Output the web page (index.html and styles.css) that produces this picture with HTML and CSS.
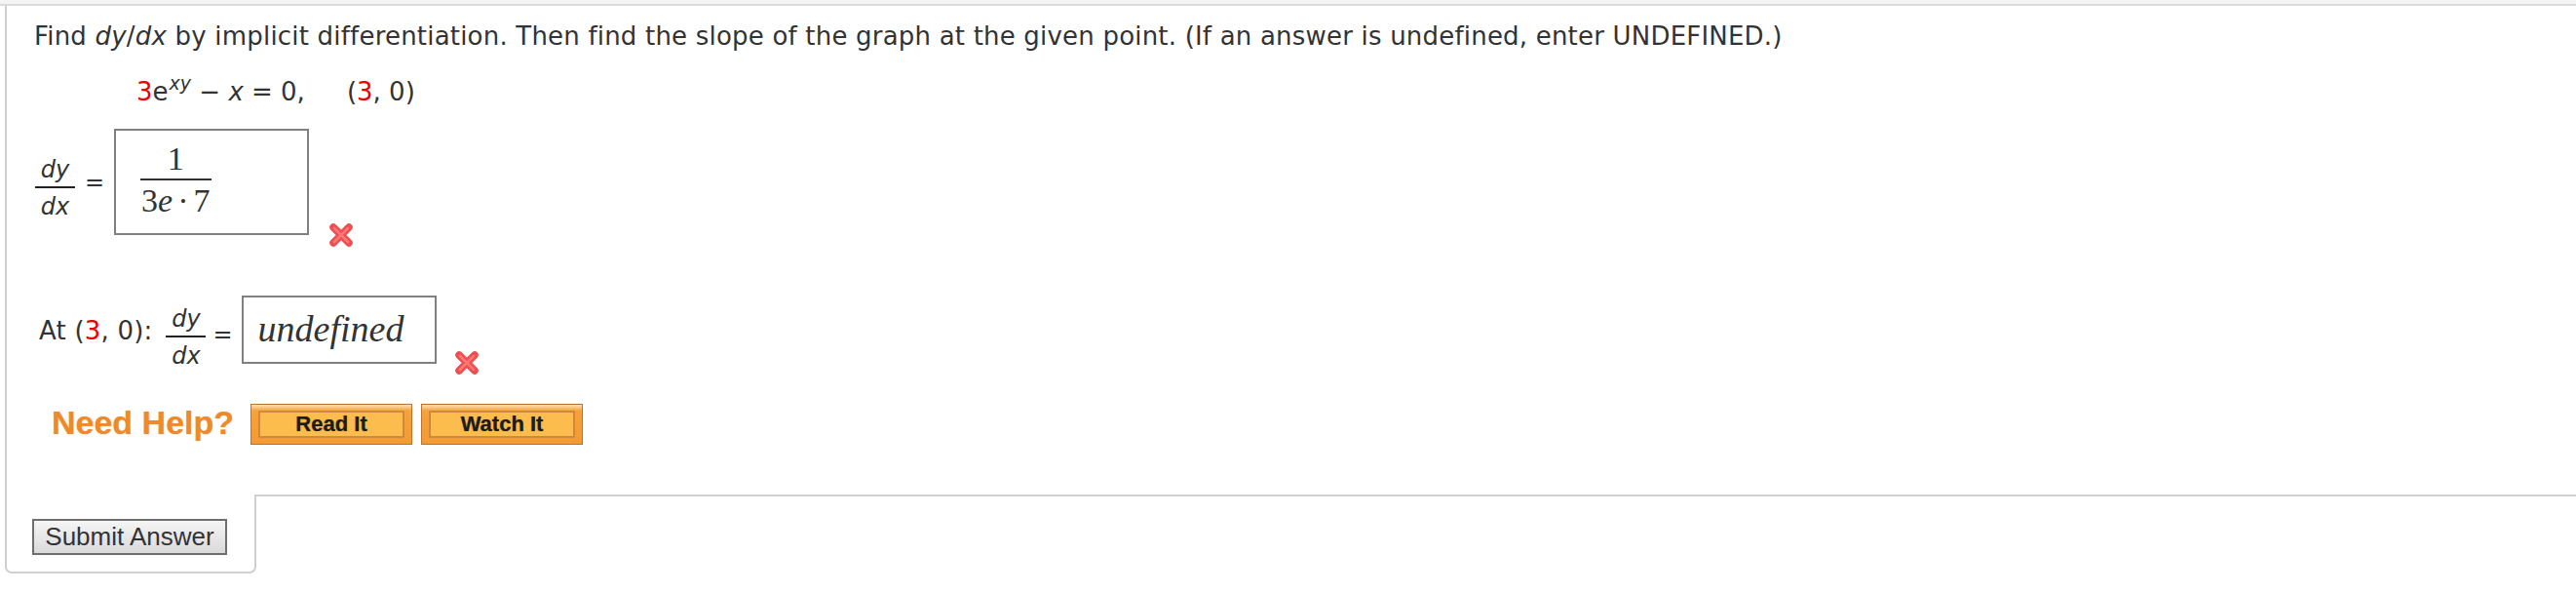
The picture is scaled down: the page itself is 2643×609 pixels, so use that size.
FILE: index.html
```html
<html>
<head>
    <link rel="stylesheet" href="styles.css">
</head>
<body>

<div class="topbar"></div>
<div class="panel">
  <div class="question">
    <p class="prompt">Find <i>dy</i>/<i>dx</i> by implicit differentiation. Then find the slope of the graph at the given point. (If an answer is undefined, enter UNDEFINED.)</p>

    <p class="equation"><span class="red">3</span>e<sup><i>xy</i></sup> &minus; <i>x</i> = 0,<span class="point">(<span class="red">3</span>, 0)</span></p>

    <div class="answer-row row-one">
      <span class="frac"><span class="num">dy</span><span class="den">dx</span></span>
      <span class="eq">=</span>
      <div class="answer-box box-frac">
        <span class="mfrac"><span class="mnum">1</span><span class="mden">3<i>e</i><span class="cdot">&middot;</span>7</span></span>
      </div>
      <svg class="wrong" width="28" height="28" viewBox="0 0 28 28">
        <path d="M6 6L22 22M22 6L6 22" stroke="#f04e4e" stroke-width="7.5" stroke-linecap="round" fill="none"/>
        <path d="M7 7L21 21M21 7L7 21" stroke="#ff7878" stroke-width="2.5" stroke-linecap="round" fill="none"/>
      </svg>
    </div>

    <div class="answer-row row-two">
      <span class="at">At (<span class="red">3</span>, 0):</span>
      <span class="frac"><span class="num">dy</span><span class="den">dx</span></span>
      <span class="eq">=</span>
      <div class="answer-box box-text">
        <span class="typed">undefined</span>
      </div>
      <svg class="wrong" width="28" height="28" viewBox="0 0 28 28">
        <path d="M6 6L22 22M22 6L6 22" stroke="#f04e4e" stroke-width="7.5" stroke-linecap="round" fill="none"/>
        <path d="M7 7L21 21M21 7L7 21" stroke="#ff7878" stroke-width="2.5" stroke-linecap="round" fill="none"/>
      </svg>
    </div>

    <div class="help-row">
      <span class="need-help">Need Help?</span>
      <span class="help-btn"><span class="help-inner">Read It</span></span>
      <span class="help-btn"><span class="help-inner">Watch It</span></span>
    </div>
  </div>

  <div class="footer">
    <div class="submit-cell"><button class="submit">Submit Answer</button></div>
    <div class="footer-rest"></div>
  </div>
</div>

</body>
</html>
```

FILE: styles.css
```css
body { margin: 0; background: #fff; color: #333; font-family: "DejaVu Sans", Verdana, sans-serif; }
.topbar { height: 4px; background: #f4f4f4; }
.panel { border-top: 2px solid #dadada; }
.question { margin-left: 5px; border-left: 2px solid #d0d0d0; padding: 16px 0 51px 28px; }
.red { color: #ee0000; }

.prompt { margin: 0; font-size: 26px; line-height: 30px; letter-spacing: 0.2px; white-space: nowrap; }
.equation { margin: 27px 0 0 105px; font-size: 26px; line-height: 30px; white-space: nowrap; }
.equation sup { font-size: 19px; line-height: 0; vertical-align: 11px; margin-left: 1px; }
.equation .point { margin-left: 43px; }

.answer-row { display: flex; align-items: flex-start; }
.row-one { margin-top: 23px; }
.row-two { margin-top: 62px; }

.frac { display: inline-flex; flex-direction: column; align-items: stretch; min-width: 41px; font-size: 24px; line-height: 26px; font-style: italic; text-align: center; }
.frac .num { padding: 0 2px 4px; border-bottom: 2px solid #222; }
.frac .den { padding-top: 6px; }
.eq { font-size: 24px; line-height: 26px; }

.answer-box { border: 2px solid #808080; box-sizing: border-box; width: 200px; }
.wrong { flex: none; }

.row-one .frac { margin: 29px 0 0 1px; }
.row-one .eq { margin: 42px 0 0 10px; }
.row-one .answer-box { height: 109px; margin-left: 10px; padding: 12px 0 0 25px; }
.row-one .wrong { margin: 95px 0 -14px 19px; }

.mfrac { display: inline-flex; flex-direction: column; font-family: "Liberation Serif", "Times New Roman", serif; font-size: 34px; line-height: 34px; text-align: center; color: #333; }
.mnum { padding-bottom: 3px; border-bottom: 2px solid #333; }
.mden { padding: 4px 1px 0; }
.cdot { margin: 0 5px; }

.at { font-size: 26px; line-height: 30px; letter-spacing: 0.2px; margin: 21px 14px 0 5px; white-space: nowrap; }
.row-two .frac { margin: 11px 0 -6px; }
.row-two .eq { margin: 27px 0 0 7px; }
.row-two .answer-box { height: 70px; margin-left: 9px; padding: 13px 0 0 15px; }
.typed { font-family: "Liberation Serif", "Times New Roman", serif; font-style: italic; font-size: 38px; line-height: 38px; color: #333; }
.row-two .wrong { margin: 55px 0 -13px 17px; }

.help-row { display: flex; align-items: flex-start; margin-top: 41px; }
.need-help { font-family: "Liberation Sans", Arial, sans-serif; font-weight: bold; font-size: 34px; line-height: 34px; color: #ef8a2c; margin: 2px 8px 0 18px; text-shadow: 0 0 1px rgba(239, 138, 44, 0.6); }
.help-btn { box-sizing: border-box; width: 166px; height: 42px; padding: 6px 7px; margin-left: 9px; border: 1px solid #b8742f; background: linear-gradient(#fde3b8 0, #f7a23a 6px, #f59a33 100%); }
.help-inner { display: flex; align-items: center; justify-content: center; height: 100%; box-sizing: border-box; border: 2px solid #cd8a3e; background: #fdbc4e; font-family: "Liberation Sans", Arial, sans-serif; font-weight: bold; font-size: 22px; color: #1c1c1c; text-shadow: 0 0 1px rgba(0, 0, 0, 0.5); }

.footer { display: flex; }
.submit-cell { margin-left: 5px; width: 258px; box-sizing: border-box; border: 2px solid #d0d0d0; border-top: 0; border-radius: 0 0 7px 7px; padding: 25px 0 17px 26px; }
.submit { display: block; box-sizing: border-box; width: 200px; height: 37px; padding: 0; border: 2px solid #6e6e6e; background: linear-gradient(#f5f5f5, #dadada); font-family: "Liberation Sans", Arial, sans-serif; font-size: 26px; color: #333; }
.footer-rest { flex: 1; border-top: 2px solid #d0d0d0; }
```
